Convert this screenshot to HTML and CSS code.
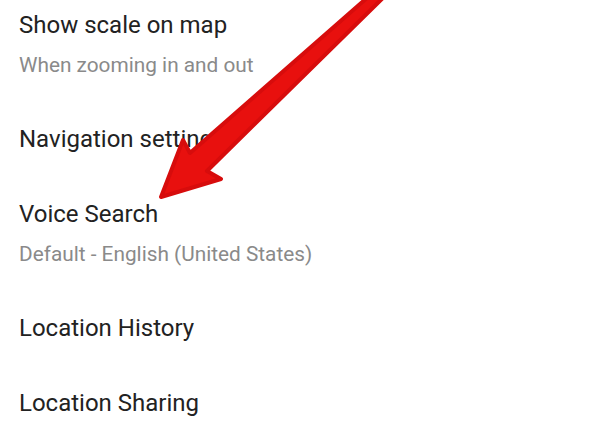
FILE: index.html
```html
<!DOCTYPE html>
<html lang="en">

<head>
    <meta charset="UTF-8">
    <meta name="viewport" content="width=device-width, initial-scale=1.0">
    <title>Settings</title>
    <link rel="stylesheet" href="styles.css">
</head>

<body>
    <div id="screen">
        <ul class="settings">
            <li class="setting">
                <div class="setting-title">Show scale on map</div>
                <div class="setting-sub">When zooming in and out</div>
            </li>
            <li class="setting">
                <div class="setting-title">Navigation settings</div>
            </li>
            <li class="setting">
                <div class="setting-title">Voice Search</div>
                <div class="setting-sub">Default - English (United States)</div>
            </li>
            <li class="setting">
                <div class="setting-title">Location History</div>
            </li>
            <li class="setting">
                <div class="setting-title">Location Sharing</div>
            </li>
        </ul>

        <!-- pointer drawn on top of the list -->
        <svg class="pointer" width="600" height="425" viewBox="0 0 600 425">
            <polygon points="161,197 183,140 190,153 376,-10 391,-10 207,171 221,179"
                fill="#e8100e" stroke="#d70c0c" stroke-width="4" stroke-linejoin="round" />
        </svg>
    </div>
</body>

</html>
```

FILE: styles.css
```css
* {
    box-sizing: border-box;
}

body {
    margin: 0;
    background-color: #fff;
    font-family: Roboto, "Liberation Sans", sans-serif;
}

#screen {
    position: relative;
    width: 600px;
    height: 425px;
    overflow: hidden;
}

.settings {
    list-style: none;
    margin: -12px 0 0 0;
    padding: 0;
}

.setting {
    padding: 22px 19px 23px 19px;
}

.setting-title {
    font-size: 24px;
    line-height: 30px;
    color: #222;
}

.setting-sub {
    margin-top: 11px;
    font-size: 20.8px;
    line-height: 28px;
    color: #8a8a8a;
}

.pointer {
    position: absolute;
    left: 0;
    top: 0;
}
```
